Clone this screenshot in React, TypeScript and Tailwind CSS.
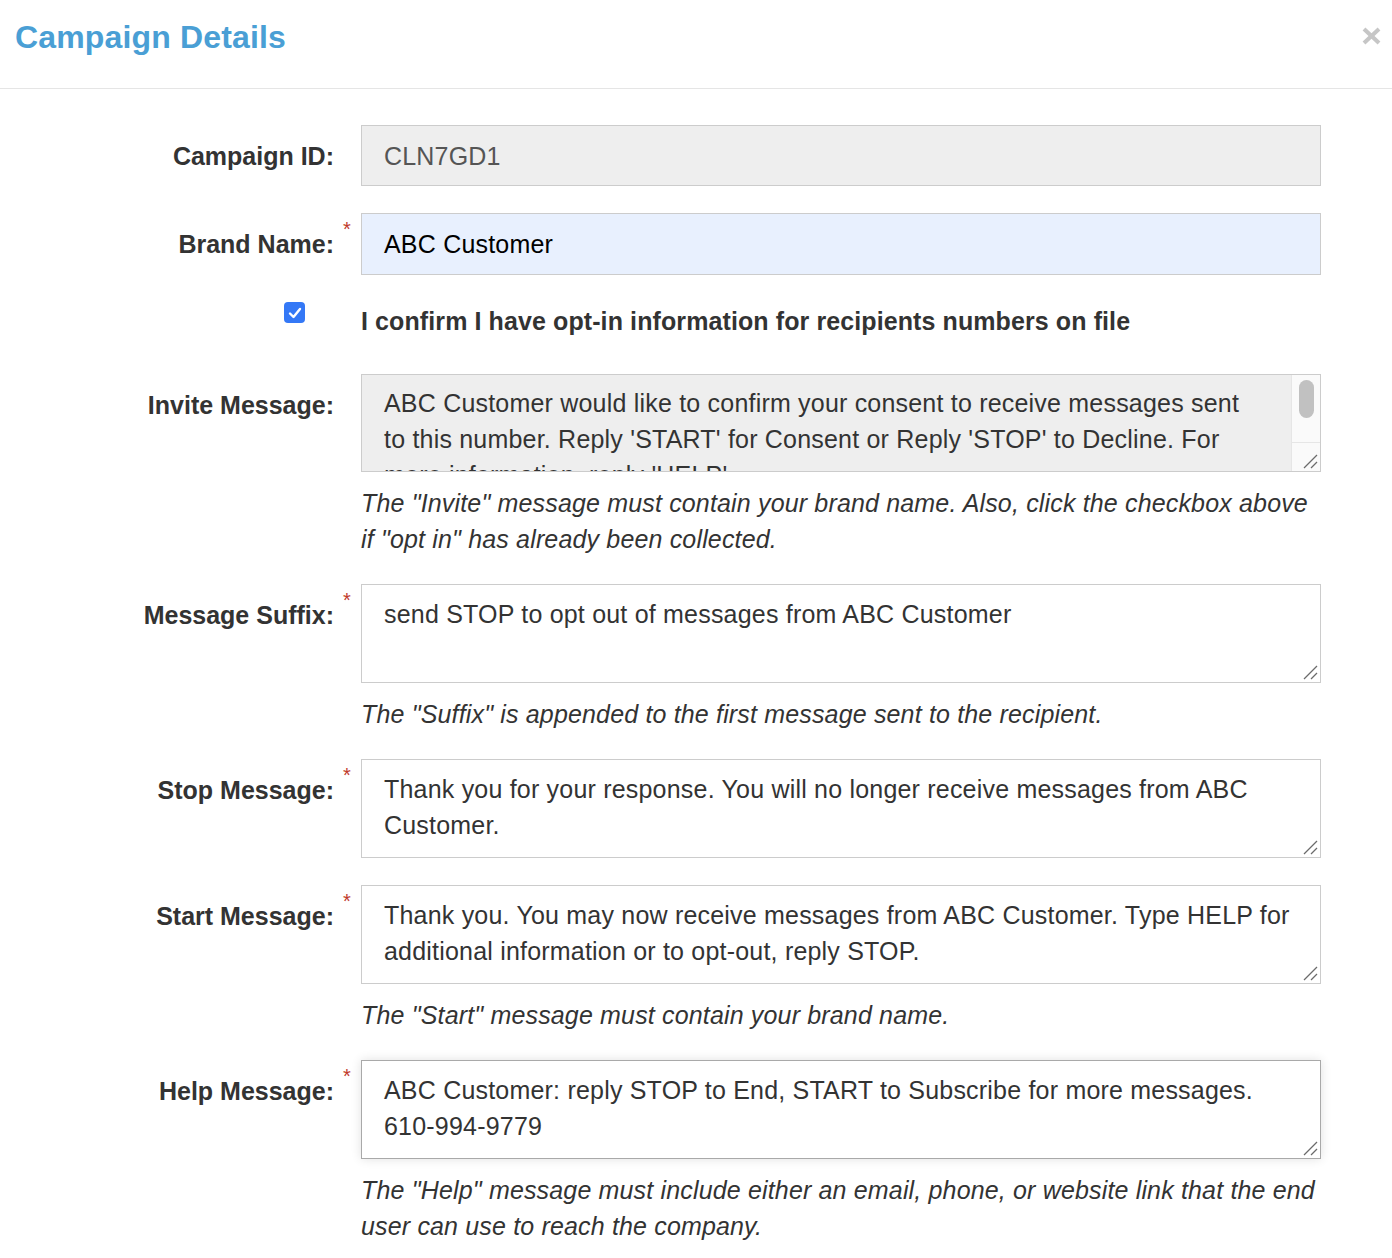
import type { ReactNode } from "react";

const font = { fontFamily: '"Liberation Sans", Arial, Helvetica, sans-serif' };

function Grip() {
  return (
    <svg
      className="absolute bottom-[2px] right-[2px]"
      width="15"
      height="15"
      viewBox="0 0 15 15"
    >
      <line x1="1" y1="14" x2="14" y2="1" stroke="#6b6b6b" strokeWidth="1.3" />
      <line x1="8" y1="14" x2="14" y2="8" stroke="#6b6b6b" strokeWidth="1.3" />
    </svg>
  );
}

function Group({
  label,
  required,
  children,
  help,
}: {
  label: string;
  required?: boolean;
  children: ReactNode;
  help?: ReactNode;
}) {
  return (
    <div className="mb-[27px] flex">
      <div className="w-[334px] shrink-0 pt-[13px] text-right text-[25px] font-bold leading-[36px] text-[#333]">
        {label}
      </div>
      <div className="relative w-[27px] shrink-0">
        {required && (
          <span className="absolute left-[9px] top-[6px] text-[20px] leading-none text-[#c0392b]">
            *
          </span>
        )}
      </div>
      <div className="w-[960px] shrink-0">
        {children}
        {help && (
          <div className="mt-[13px] text-[25px] italic leading-[36px] tracking-[0.16px] text-[#333]">
            {help}
          </div>
        )}
      </div>
    </div>
  );
}

function Area({ lines, focused }: { lines: string[]; focused?: boolean }) {
  return (
    <div
      className={
        "relative h-[99px] overflow-hidden border bg-white px-[22px] pt-[11px] text-[25px] leading-[36px] tracking-[0.2px] text-[#333] " +
        (focused
          ? "border-[#a9a9a9] shadow-[0_0_10px_rgba(0,0,0,0.12)]"
          : "border-[#cccccc]")
      }
    >
      {lines.map((l) => (
        <div key={l} className="whitespace-nowrap">
          {l}
        </div>
      ))}
      <Grip />
    </div>
  );
}

export default function App() {
  return (
    <div className="min-h-[1258px] w-[1392px] bg-white" style={font}>
      <div className="flex h-[89px] items-start justify-between border-b border-[#e5e5e5]">
        <h1 className="pl-[15px] pt-[17px] text-[32px] font-bold leading-[40px] tracking-[0.15px] text-[#4a9fd5]">
          Campaign Details
        </h1>
        <svg className="mr-[11px] mt-[27px]" width="19" height="18" viewBox="0 0 19 18">
          <line x1="2" y1="2" x2="17" y2="16" stroke="#c6c6c6" strokeWidth="4" />
          <line x1="17" y1="2" x2="2" y2="16" stroke="#c6c6c6" strokeWidth="4" />
        </svg>
      </div>

      <div className="pt-[36px]">
        <Group label="Campaign ID:">
          <div className="h-[61px] border border-[#cccccc] bg-[#eeeeee] px-[22px] pt-[12px] text-[25px] leading-[36px] tracking-[0.2px] text-[#555]">
            CLN7GD1
          </div>
        </Group>

        <Group label="Brand Name:" required>
          <div className="h-[62px] border border-[#cccccc] bg-[#e8f0fe] px-[22px] pt-[12px] text-[25px] leading-[36px] tracking-[0.2px] text-black">
            ABC Customer
          </div>
        </Group>

        <div className="mb-[35px] flex">
          <div className="flex w-[334px] shrink-0 justify-end pr-[29px]">
            <div className="flex h-[21px] w-[21px] items-center justify-center rounded-[4px] bg-[#3478f6]">
              <svg width="14" height="12" viewBox="0 0 14 12">
                <path
                  d="M2 6.5 L5.5 10 L12 2"
                  fill="none"
                  stroke="white"
                  strokeWidth="2.4"
                  strokeLinecap="round"
                  strokeLinejoin="round"
                />
              </svg>
            </div>
          </div>
          <div className="w-[27px] shrink-0" />
          <div className="pt-px text-[25px] font-bold leading-[36px] tracking-[0.1px] text-[#333]">
            I confirm I have opt-in information for recipients numbers on file
          </div>
        </div>

        <Group
          label="Invite Message:"
          help={
            <>
              The "Invite" message must contain your brand name. Also, click the checkbox above
              <br />
              if "opt in" has already been collected.
            </>
          }
        >
          <div className="relative h-[98px] overflow-hidden border border-[#cccccc] bg-[#eeeeee] pl-[22px] pt-[10px] text-[25px] leading-[36px] tracking-[0.2px] text-[#333]">
            <div className="whitespace-nowrap">
              ABC Customer would like to confirm your consent to receive messages sent
            </div>
            <div className="whitespace-nowrap">
              to this number. Reply 'START' for Consent or Reply 'STOP' to Decline. For
            </div>
            <div className="whitespace-nowrap">more information, reply 'HELP'.</div>
            <div className="absolute bottom-0 right-0 top-0 flex w-[29px] flex-col border-l border-[#e6e6e6] bg-[#fafafa]">
              <div className="flex flex-1 justify-center pt-[5px]">
                <div className="h-[38px] w-[15px] rounded-full bg-[#c1c1c1]" />
              </div>
              <div className="relative h-[29px] border-t border-[#e6e6e6]">
                <Grip />
              </div>
            </div>
          </div>
        </Group>

        <Group
          label="Message Suffix:"
          required
          help={<>The "Suffix" is appended to the first message sent to the recipient.</>}
        >
          <Area lines={["send STOP to opt out of messages from ABC Customer"]} />
        </Group>

        <Group label="Stop Message:" required>
          <Area
            lines={[
              "Thank you for your response. You will no longer receive messages from ABC",
              "Customer.",
            ]}
          />
        </Group>

        <Group
          label="Start Message:"
          required
          help={<>The "Start" message must contain your brand name.</>}
        >
          <Area
            lines={[
              "Thank you. You may now receive messages from ABC Customer. Type HELP for",
              "additional information or to opt-out, reply STOP.",
            ]}
          />
        </Group>

        <Group
          label="Help Message:"
          required
          help={
            <>
              The "Help" message must include either an email, phone, or website link that the end
              <br />
              user can use to reach the company.
            </>
          }
        >
          <Area
            focused
            lines={[
              "ABC Customer: reply STOP to End, START to Subscribe for more messages.",
              "610-994-9779",
            ]}
          />
        </Group>
      </div>
    </div>
  );
}
